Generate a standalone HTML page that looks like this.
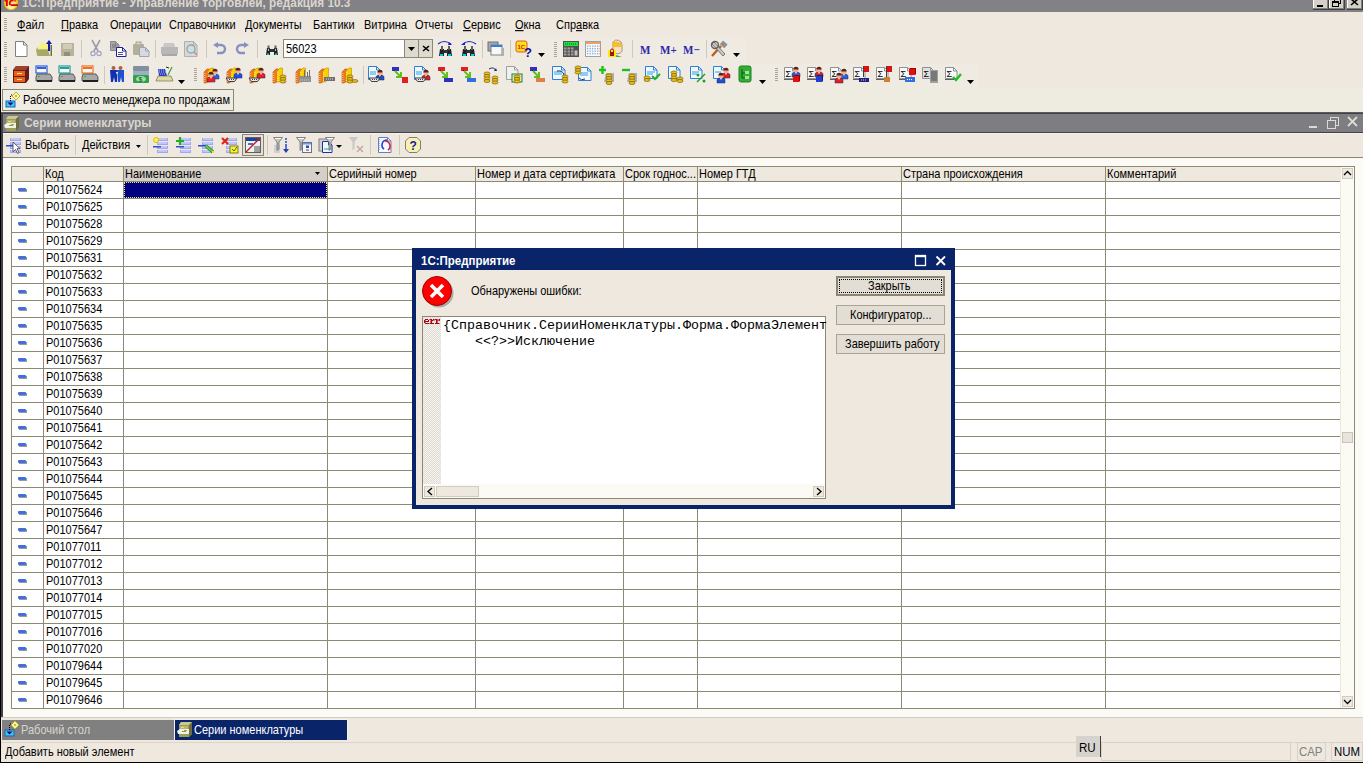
<!DOCTYPE html>
<html><head><meta charset="utf-8">
<style>
*{box-sizing:border-box;margin:0;padding:0}
html,body{width:1363px;height:763px;overflow:hidden}
body{position:relative;background:#EEE8DF;font-family:"Liberation Sans",sans-serif;font-size:11px;color:#000}
.a{position:absolute}
svg.a{overflow:visible}
.t{position:absolute;white-space:nowrap;line-height:13px;transform:scaleY(1.12);transform-origin:0 10.3px}
.nt{transform:none}
.u{text-decoration:underline}
.m{font-family:"Liberation Mono",monospace}
</style></head><body>

<div class="a" style="left:0px;top:0px;width:1363px;height:12px;background:#828185"></div>
<svg class="a" style="left:4px;top:-4px" width="16" height="16" viewBox="0 0 16 16"><circle cx="7" cy="7" r="7" fill="#F0C818"/><circle cx="7" cy="8.5" r="5" fill="#F8E070"/><circle cx="7" cy="10" r="3" fill="#FCF0A8"/><rect x="2" y="3" width="1.8" height="7" fill="#E80000"/><path d="M0.8 5.2L2.8 3.6" stroke="#E80000" stroke-width="1.4"/><path d="M9.5 4.6A2.6 2.6 0 0 0 5.8 6.6V9" stroke="#E80000" stroke-width="1.8" fill="none"/><rect x="6.5" y="8.2" width="7.5" height="1.8" fill="#E80000"/><path d="M11 4v1.5" stroke="#E80000" stroke-width="1.2"/></svg>
<div class="t" style="left:22px;top:-3px;font-weight:bold;font-size:11.8px;color:#DAD6CE">1С:Предприятие - Управление торговлей, редакция 10.3</div>
<div class="a" style="left:1313px;top:-4px;width:16px;height:14px;background:#D4D0C8;border-right:1px solid #404040;border-bottom:1px solid #404040;box-shadow:inset -1px -1px #808080, inset 1px 1px #fff"></div>
<svg class="a" style="left:1313px;top:-4px" width="16" height="14" viewBox="0 0 16 14"><rect x="4" y="9" width="6" height="2" fill="#000"/></svg>
<div class="a" style="left:1329px;top:-4px;width:16px;height:14px;background:#D4D0C8;border-right:1px solid #404040;border-bottom:1px solid #404040;box-shadow:inset -1px -1px #808080, inset 1px 1px #fff"></div>
<svg class="a" style="left:1329px;top:-4px" width="16" height="14" viewBox="0 0 16 14"><rect x="5.5" y="2.5" width="6" height="5" fill="none" stroke="#000"/><rect x="5" y="2" width="7" height="2" fill="#000"/><rect x="3.5" y="5.5" width="6" height="5" fill="#D4D0C8" stroke="#000"/><rect x="3" y="5" width="7" height="2" fill="#000"/></svg>
<div class="a" style="left:1347px;top:-4px;width:16px;height:14px;background:#D4D0C8;border-right:1px solid #404040;border-bottom:1px solid #404040;box-shadow:inset -1px -1px #808080, inset 1px 1px #fff"></div>
<svg class="a" style="left:1347px;top:-4px" width="16" height="14" viewBox="0 0 16 14"><path d="M4 3l7 6M11 3l-7 6" stroke="#000" stroke-width="1.6"/></svg>
<div class="a" style="left:1px;top:12px;width:1362px;height:26px;background:#EEE8DF"></div>
<svg class="a" style="left:4px;top:18px" width="4" height="13" viewBox="0 0 4 13"><rect x="0" y="0" width="3" height="1" fill="#A8A496"/><rect x="0" y="2" width="3" height="1" fill="#A8A496"/><rect x="0" y="4" width="3" height="1" fill="#A8A496"/><rect x="0" y="6" width="3" height="1" fill="#A8A496"/><rect x="0" y="8" width="3" height="1" fill="#A8A496"/><rect x="0" y="10" width="3" height="1" fill="#A8A496"/><rect x="0" y="12" width="3" height="1" fill="#A8A496"/></svg>
<div class="t" style="left:17px;top:19px;"><span class="u">Ф</span>айл</div>
<div class="t" style="left:61px;top:19px;"><span class="u">П</span>равка</div>
<div class="t" style="left:110px;top:19px;">Операции</div>
<div class="t" style="left:169px;top:19px;">Справочники</div>
<div class="t" style="left:245px;top:19px;">Документы</div>
<div class="t" style="left:313px;top:19px;">Бантики</div>
<div class="t" style="left:364px;top:19px;">Витрина</div>
<div class="t" style="left:415px;top:19px;">Отчеты</div>
<div class="t" style="left:463px;top:19px;"><span class="u">С</span>ервис</div>
<div class="t" style="left:515px;top:19px;"><span class="u">О</span>кна</div>
<div class="t" style="left:556px;top:19px;">Спр<span class="u">а</span>вка</div>
<div class="a" style="left:1px;top:37px;width:745px;height:26px;background:#EFEBE3"></div>
<div class="a" style="left:1px;top:63px;width:978px;height:25px;background:#EFEBE3"></div>
<svg class="a" style="left:4px;top:42px" width="4" height="15" viewBox="0 0 4 15"><rect x="0" y="0" width="3" height="1" fill="#A8A496"/><rect x="0" y="2" width="3" height="1" fill="#A8A496"/><rect x="0" y="4" width="3" height="1" fill="#A8A496"/><rect x="0" y="6" width="3" height="1" fill="#A8A496"/><rect x="0" y="8" width="3" height="1" fill="#A8A496"/><rect x="0" y="10" width="3" height="1" fill="#A8A496"/><rect x="0" y="12" width="3" height="1" fill="#A8A496"/><rect x="0" y="14" width="3" height="1" fill="#A8A496"/></svg>
<svg class="a" style="left:15px;top:41px" width="16" height="16" viewBox="0 0 16 16"><path d="M0.5 0.5h8l3.5 3.5V15.5H0.5z" fill="#FFFFFF" stroke="#808080"/><path d="M8.5 0.5v3.5h3.5" fill="none" stroke="#808080"/></svg>
<svg class="a" style="left:36px;top:40px" width="17" height="17" viewBox="0 0 17 17"><path d="M0 9l3-3h9v10H1z" fill="#BDBD7A"/><path d="M2 6l4-3h6v6H2z" fill="#F8F080"/><path d="M0 10h12l2 6H2z" fill="#A8A868"/><path d="M13 1v10" stroke="#1020A0" stroke-width="2"/><path d="M10 4l3-4 3 4z" fill="#1020A0"/><rect x="14.5" y="5" width="1.5" height="11" fill="#707030"/></svg>
<svg class="a" style="left:61px;top:43px" width="13" height="13" viewBox="0 0 13 13"><rect x="0" y="0" width="13" height="13" fill="#B8B49C"/><rect x="2" y="1" width="9" height="5" fill="#D0CCB8"/><rect x="3" y="9" width="6" height="4" fill="#909078"/></svg>
<div class="a" style="left:81px;top:40px;width:1px;height:18px;background:#CDC9BD"></div>
<svg class="a" style="left:90px;top:40px" width="12" height="17" viewBox="0 0 12 17"><path d="M2 0l6 11M10 0L4 11" stroke="#9C9CA8" stroke-width="1.6"/><circle cx="3" cy="13.5" r="2.2" fill="none" stroke="#A0A0C8" stroke-width="1.2"/><circle cx="9" cy="13.5" r="2.2" fill="none" stroke="#A0A0C8" stroke-width="1.2"/></svg>
<svg class="a" style="left:110px;top:41px" width="16" height="16" viewBox="0 0 16 16"><path d="M0.5 0.5h5l3.5 3.5V9.5H0.5z" fill="#A8A8A8" stroke="#888888"/><path d="M5.5 0.5v3.5h3.5" fill="none" stroke="#888888"/><path d="M2 4h4M2 6h4" stroke="#707070"/><path d="M6.5 6.5h6l3.5 3.5V15.5H6.5z" fill="#FFFFFF" stroke="#202090"/><path d="M12.5 6.5v3.5h3.5" fill="none" stroke="#202090"/><path d="M8 11.5h5M8 13.5h5" stroke="#202090" stroke-width=".8"/></svg>
<svg class="a" style="left:133px;top:41px" width="16" height="16" viewBox="0 0 16 16"><rect x="0" y="3" width="11" height="11" rx="1" fill="#B4B098"/><rect x="3" y="1" width="5" height="3" fill="#D8D4C4" stroke="#A8A490"/><path d="M6.5 6.5h6l3.5 3.5V15.5H6.5z" fill="#D8D8E0" stroke="#A0A0B8"/><path d="M12.5 6.5v3.5h3.5" fill="none" stroke="#A0A0B8"/></svg>
<div class="a" style="left:155px;top:40px;width:1px;height:18px;background:#CDC9BD"></div>
<svg class="a" style="left:161px;top:43px" width="17" height="13" viewBox="0 0 17 13"><path d="M3 0h10l1 4H2z" fill="#C8C8C8"/><path d="M0 4h17v7H0z" fill="#B8B8B8"/><rect x="1" y="11" width="15" height="2" fill="#A8A8A8"/></svg>
<svg class="a" style="left:184px;top:41px" width="15" height="16" viewBox="0 0 15 16"><path d="M0.5 0.5h9l3.5 3.5V15.5H0.5z" fill="#D8D8D8" stroke="#B0B0B0"/><path d="M9.5 0.5v3.5h3.5" fill="none" stroke="#B0B0B0"/><circle cx="7" cy="8" r="4" fill="#C8E0E8" stroke="#A0A0A0" stroke-width="1.3"/><path d="M10 11l3 3" stroke="#C09090" stroke-width="1.6"/></svg>
<div class="a" style="left:206px;top:40px;width:1px;height:18px;background:#CDC9BD"></div>
<svg class="a" style="left:213px;top:42px" width="13" height="14" viewBox="0 0 13 14"><path d="M4 3h4a4 4 0 0 1 0 8H4" stroke="#8890C0" stroke-width="2.4" fill="none"/><path d="M0 3l5-3v6z" fill="#8890C0"/></svg>
<svg class="a" style="left:236px;top:42px" width="13" height="14" viewBox="0 0 13 14"><path d="M9 3H5a4 4 0 0 0 0 8h4" stroke="#8890C0" stroke-width="2.4" fill="none"/><path d="M13 3L8 0v6z" fill="#8890C0"/></svg>
<div class="a" style="left:257px;top:40px;width:1px;height:18px;background:#CDC9BD"></div>
<svg class="a" style="left:266px;top:45px" width="12" height="10" viewBox="0 0 12 10"><path d="M1 3h3v7H0z M8 3h3l1 7H8z" fill="#202020"/><rect x="1.5" y="0.5" width="2" height="3" fill="#606060"/><rect x="8.5" y="0.5" width="2" height="3" fill="#606060"/><rect x="4" y="4" width="4" height="3" fill="#303030"/><rect x="1" y="8.5" width="2" height="1.5" fill="#00D0F0"/><rect x="9" y="8.5" width="2" height="1.5" fill="#00D0F0"/><rect x="2" y="4" width="1" height="2" fill="#C0C0C0"/><rect x="9" y="4" width="1" height="2" fill="#C0C0C0"/></svg>
<div class="a" style="left:283px;top:39px;width:150px;height:19px;border:1px solid #8C8876;background:#fff"></div>
<div class="t" style="left:286px;top:43px;">56023</div>
<div class="a" style="left:404px;top:40px;width:14px;height:17px;background:#DEDAD0;border-left:1px solid #8C8876"></div>
<div class="a" style="left:418px;top:40px;width:14px;height:17px;background:#DEDAD0;border-left:1px solid #8C8876"></div>
<svg class="a" style="left:408px;top:47px" width="7" height="4" viewBox="0 0 7 4"><path d="M0 0H7L3.5 4Z" fill="#000"/></svg>
<svg class="a" style="left:422px;top:45px" width="8" height="7" viewBox="0 0 8 7"><path d="M1 1l6 5M7 1L1 6" stroke="#000" stroke-width="1.6"/></svg>
<svg class="a" style="left:437px;top:40px" width="17" height="16" viewBox="0 0 17 16"><g transform="translate(2,5)"><path d="M1 4h4v7H0z M8 4h4l1 7H8z" fill="#202020"/><rect x="2" y="1" width="2" height="4" fill="#606060"/><rect x="9" y="1" width="2" height="4" fill="#606060"/><rect x="4" y="5" width="5" height="3" fill="#303030"/><rect x="1" y="9" width="3" height="2" fill="#00D0F0"/><rect x="9" y="9" width="3" height="2" fill="#00D0F0"/></g><path d="M1 4Q7 -1 14 4" stroke="#2020C0" fill="none" stroke-width="1.2"/><path d="M12 2l3 3-4 0z" fill="#2020C0"/></svg>
<svg class="a" style="left:460px;top:40px" width="17" height="16" viewBox="0 0 17 16"><g transform="translate(2,5)"><path d="M1 4h4v7H0z M8 4h4l1 7H8z" fill="#202020"/><rect x="2" y="1" width="2" height="4" fill="#606060"/><rect x="9" y="1" width="2" height="4" fill="#606060"/><rect x="4" y="5" width="5" height="3" fill="#303030"/><rect x="1" y="9" width="3" height="2" fill="#00D0F0"/><rect x="9" y="9" width="3" height="2" fill="#00D0F0"/></g><path d="M3 4Q9 -1 16 4" stroke="#2020C0" fill="none" stroke-width="1.2"/><path d="M5 2L1 5h4z" fill="#2020C0"/></svg>
<div class="a" style="left:482px;top:40px;width:1px;height:18px;background:#CDC9BD"></div>
<svg class="a" style="left:488px;top:42px" width="16" height="15" viewBox="0 0 16 15"><rect x="0" y="0" width="10" height="9" fill="#A8A8A8" stroke="#707070"/><rect x="3" y="3" width="11" height="10" fill="#F8F8F8" stroke="#808080"/><rect x="3" y="3" width="11" height="2" fill="#3080E0"/><rect x="14" y="6" width="2" height="8" fill="#B0B0B0"/></svg>
<div class="a" style="left:510px;top:40px;width:1px;height:18px;background:#CDC9BD"></div>
<svg class="a" style="left:516px;top:41px" width="16" height="16" viewBox="0 0 16 16"><rect x="0" y="0" width="11" height="11" rx="2" fill="#F8E020" stroke="#E06010"/><text x="1.5" y="8" font-family="Liberation Sans" font-weight="bold" font-size="6" fill="#E01010">1С</text><text x="8" y="16" font-family="Liberation Sans" font-weight="bold" font-size="13" fill="#1010A0">?</text></svg>
<svg class="a" style="left:538px;top:53px" width="7" height="4" viewBox="0 0 7 4"><path d="M0 0H7L3.5 4Z" fill="#000"/></svg>
<svg class="a" style="left:554px;top:42px" width="4" height="15" viewBox="0 0 4 15"><rect x="0" y="0" width="3" height="1" fill="#A8A496"/><rect x="0" y="2" width="3" height="1" fill="#A8A496"/><rect x="0" y="4" width="3" height="1" fill="#A8A496"/><rect x="0" y="6" width="3" height="1" fill="#A8A496"/><rect x="0" y="8" width="3" height="1" fill="#A8A496"/><rect x="0" y="10" width="3" height="1" fill="#A8A496"/><rect x="0" y="12" width="3" height="1" fill="#A8A496"/><rect x="0" y="14" width="3" height="1" fill="#A8A496"/></svg>
<svg class="a" style="left:563px;top:41px" width="16" height="16" viewBox="0 0 16 16"><rect x="0" y="0" width="16" height="16" fill="#505050"/><rect x="1" y="1" width="14" height="4" fill="#20E040"/><path d="M2 3h12" stroke="#106020" stroke-dasharray="1 1"/><rect x="1.0" y="6.5" width="2.5" height="2" fill="#A0A0A0"/><rect x="4.5" y="6.5" width="2.5" height="2" fill="#A0A0A0"/><rect x="8.0" y="6.5" width="2.5" height="2" fill="#A0A0A0"/><rect x="1.0" y="9.5" width="2.5" height="2" fill="#A0A0A0"/><rect x="4.5" y="9.5" width="2.5" height="2" fill="#A0A0A0"/><rect x="8.0" y="9.5" width="2.5" height="2" fill="#A0A0A0"/><rect x="1.0" y="12.5" width="2.5" height="2" fill="#A0A0A0"/><rect x="4.5" y="12.5" width="2.5" height="2" fill="#A0A0A0"/><rect x="8.0" y="12.5" width="2.5" height="2" fill="#A0A0A0"/><rect x="11.5" y="9.5" width="3" height="5" fill="#C0C0C0"/></svg>
<svg class="a" style="left:585px;top:41px" width="16" height="16" viewBox="0 0 16 16"><rect x="0.5" y="0.5" width="15" height="15" fill="#F8F8F8" stroke="#A0A0A0"/><rect x="1" y="1" width="14" height="2" fill="#F0A060"/><rect x="2.0" y="4.5" width="1.3" height="1.3" fill="#80B0E0"/><rect x="4.5" y="4.5" width="1.3" height="1.3" fill="#80B0E0"/><rect x="7.0" y="4.5" width="1.3" height="1.3" fill="#80B0E0"/><rect x="9.5" y="4.5" width="1.3" height="1.3" fill="#80B0E0"/><rect x="12.0" y="4.5" width="1.3" height="1.3" fill="#80B0E0"/><rect x="14.5" y="4.5" width="1.3" height="1.3" fill="#F08050"/><rect x="2.0" y="7.0" width="1.3" height="1.3" fill="#80B0E0"/><rect x="4.5" y="7.0" width="1.3" height="1.3" fill="#80B0E0"/><rect x="7.0" y="7.0" width="1.3" height="1.3" fill="#80B0E0"/><rect x="9.5" y="7.0" width="1.3" height="1.3" fill="#80B0E0"/><rect x="12.0" y="7.0" width="1.3" height="1.3" fill="#80B0E0"/><rect x="14.5" y="7.0" width="1.3" height="1.3" fill="#F08050"/><rect x="2.0" y="9.5" width="1.3" height="1.3" fill="#80B0E0"/><rect x="4.5" y="9.5" width="1.3" height="1.3" fill="#80B0E0"/><rect x="7.0" y="9.5" width="1.3" height="1.3" fill="#80B0E0"/><rect x="9.5" y="9.5" width="1.3" height="1.3" fill="#80B0E0"/><rect x="12.0" y="9.5" width="1.3" height="1.3" fill="#80B0E0"/><rect x="14.5" y="9.5" width="1.3" height="1.3" fill="#F08050"/><rect x="2.0" y="12.0" width="1.3" height="1.3" fill="#80B0E0"/><rect x="4.5" y="12.0" width="1.3" height="1.3" fill="#80B0E0"/><rect x="7.0" y="12.0" width="1.3" height="1.3" fill="#80B0E0"/><rect x="9.5" y="12.0" width="1.3" height="1.3" fill="#80B0E0"/><rect x="12.0" y="12.0" width="1.3" height="1.3" fill="#80B0E0"/><rect x="14.5" y="12.0" width="1.3" height="1.3" fill="#F08050"/></svg>
<svg class="a" style="left:608px;top:41px" width="15" height="16" viewBox="0 0 15 16"><path d="M5 1a5 5 0 0 1 9 3v6a5 5 0 0 1-9 0z" fill="#F8E0C0" stroke="#806040" stroke-width=".6"/><path d="M4 2q5-3 10 1v3h-10z" fill="#F0C030"/><path d="M8 14l6 2h-6z" fill="#40B040"/><rect x="0" y="9" width="8" height="7" fill="#F8F000"/><rect x="2" y="11" width="4" height="4" fill="#A01030"/><path d="M2.5 11v-1.5a1.5 1.5 0 0 1 3 0V11" stroke="#A01030" fill="none"/></svg>
<div class="a" style="left:632px;top:40px;width:1px;height:18px;background:#CDC9BD"></div>
<div class="t" style="left:640px;top:44px;font-family:'Liberation Serif',serif;font-weight:bold;font-size:11px;color:#2828A8;line-height:13px">M</div>
<div class="t" style="left:660px;top:44px;font-family:'Liberation Serif',serif;font-weight:bold;font-size:11px;color:#2828A8;line-height:13px">M+</div>
<div class="t" style="left:683px;top:44px;font-family:'Liberation Serif',serif;font-weight:bold;font-size:11px;color:#2828A8;line-height:13px">M−</div>
<div class="a" style="left:706px;top:40px;width:1px;height:18px;background:#CDC9BD"></div>
<svg class="a" style="left:710px;top:41px" width="17" height="17" viewBox="0 0 17 17"><path d="M2 15l9-10" stroke="#C06010" stroke-width="2.4"/><path d="M4 1l11 12-2 2L2 3z" fill="#C8C8C8" stroke="#606060" stroke-width=".8"/><circle cx="5" cy="4" r="3.5" fill="none" stroke="#606060" stroke-width="1.4"/><rect x="11" y="1" width="6" height="5" fill="#909090" transform="rotate(40 14 3)"/></svg>
<svg class="a" style="left:733px;top:53px" width="7" height="4" viewBox="0 0 7 4"><path d="M0 0H7L3.5 4Z" fill="#000"/></svg>
<svg class="a" style="left:4px;top:67px" width="4" height="15" viewBox="0 0 4 15"><rect x="0" y="0" width="3" height="1" fill="#A8A496"/><rect x="0" y="2" width="3" height="1" fill="#A8A496"/><rect x="0" y="4" width="3" height="1" fill="#A8A496"/><rect x="0" y="6" width="3" height="1" fill="#A8A496"/><rect x="0" y="8" width="3" height="1" fill="#A8A496"/><rect x="0" y="10" width="3" height="1" fill="#A8A496"/><rect x="0" y="12" width="3" height="1" fill="#A8A496"/><rect x="0" y="14" width="3" height="1" fill="#A8A496"/></svg>
<svg class="a" style="left:13px;top:66px" width="16" height="17" viewBox="0 0 16 17"><path d="M3 0h13v13l-3 4H0V4z" fill="#602020"/><path d="M3 0h13l-3 4H0z" fill="#A04030"/><rect x="1" y="5" width="11" height="5" fill="#F06010"/><rect x="1" y="11" width="11" height="5" fill="#F06010"/><rect x="4" y="7" width="5" height="1" fill="#F8E0A0"/><rect x="4" y="13" width="5" height="1" fill="#F8E0A0"/></svg>
<svg class="a" style="left:36px;top:66px" width="17" height="17" viewBox="0 0 17 17"><rect x="0" y="0" width="11" height="7" fill="#F8F8F8" stroke="#3060E0" stroke-width="1.2"/><rect x="1" y="1" width="9" height="2" fill="#3060E0"/><path d="M1 8h13l2 3v4H0v-4z" fill="#A8A8A8" stroke="#404040" stroke-width=".8"/><rect x="1" y="14" width="15" height="2" fill="#202020"/><rect x="2" y="10" width="2" height="1" fill="#20C020"/></svg>
<svg class="a" style="left:59px;top:66px" width="17" height="17" viewBox="0 0 17 17"><rect x="0" y="0" width="11" height="7" fill="#F8F8F8" stroke="#20A0A0" stroke-width="1.2"/><rect x="1" y="1" width="9" height="2" fill="#20A0A0"/><path d="M1 8h13l2 3v4H0v-4z" fill="#A8A8A8" stroke="#404040" stroke-width=".8"/><rect x="1" y="14" width="15" height="2" fill="#202020"/><rect x="2" y="10" width="2" height="1" fill="#20C020"/></svg>
<svg class="a" style="left:82px;top:66px" width="17" height="17" viewBox="0 0 17 17"><rect x="0" y="0" width="11" height="7" fill="#F8F8F8" stroke="#F07020" stroke-width="1.2"/><rect x="1" y="1" width="9" height="2" fill="#F07020"/><path d="M1 8h13l2 3v4H0v-4z" fill="#A8A8A8" stroke="#404040" stroke-width=".8"/><rect x="1" y="14" width="15" height="2" fill="#202020"/><rect x="2" y="10" width="2" height="1" fill="#20C020"/></svg>
<div class="a" style="left:104px;top:66px;width:1px;height:18px;background:#CDC9BD"></div>
<svg class="a" style="left:110px;top:66px" width="14" height="17" viewBox="0 0 14 17"><circle cx="3.5" cy="2" r="2" fill="#B06040"/><circle cx="10.5" cy="2" r="2" fill="#B06040"/><path d="M0 4h7v12H5l-1-5-1 5H1z" fill="#1030B0"/><path d="M7 4h7v12h-2l-1-5-1 5H8z" fill="#2050D0"/><path d="M6 6l1 3 1-3z" fill="#fff"/></svg>
<svg class="a" style="left:133px;top:66px" width="16" height="17" viewBox="0 0 16 17"><rect x="0" y="0" width="16" height="5" rx="1" fill="#8090A0"/><rect x="0" y="5" width="16" height="4" fill="#A0B0C0"/><rect x="0" y="9" width="16" height="8" rx="1" fill="#30A050"/><ellipse cx="8" cy="13" rx="5" ry="3" fill="#A0E0A0"/><text x="5.5" y="16" font-size="7" font-weight="bold" fill="#207030" font-family="Liberation Sans">$</text></svg>
<svg class="a" style="left:156px;top:66px" width="17" height="17" viewBox="0 0 17 17"><path d="M2 10h13l2 5H0z" fill="#E0D8A0" stroke="#808060" stroke-width=".8"/><path d="M2 3l7 0 2 7H3z" fill="#3040C0"/><path d="M3 4h6M3 6h7M4 8h6" stroke="#A0C0F0" stroke-dasharray="1 1"/><path d="M12 9l4-8" stroke="#40A040" stroke-width="1.3"/><path d="M10 1l3 1" stroke="#202020"/></svg>
<svg class="a" style="left:178px;top:80px" width="7" height="4" viewBox="0 0 7 4"><path d="M0 0H7L3.5 4Z" fill="#000"/></svg>
<svg class="a" style="left:194px;top:68px" width="4" height="13" viewBox="0 0 4 13"><rect x="0" y="0" width="3" height="1" fill="#A8A496"/><rect x="0" y="2" width="3" height="1" fill="#A8A496"/><rect x="0" y="4" width="3" height="1" fill="#A8A496"/><rect x="0" y="6" width="3" height="1" fill="#A8A496"/><rect x="0" y="8" width="3" height="1" fill="#A8A496"/><rect x="0" y="10" width="3" height="1" fill="#A8A496"/><rect x="0" y="12" width="3" height="1" fill="#A8A496"/></svg>
<svg class="a" style="left:203px;top:66px" width="17" height="17" viewBox="0 0 17 17"><path d="M1 6l3-3h2.5v11l-3 3H1z" fill="#F07818" stroke="#C05010" stroke-width=".6"/><path d="M1.8 7v9" stroke="#FFD0A0" stroke-dasharray="1 1"/><path d="M5 5l3-3h2.5v11l-3 3H5z" fill="#F8D000" stroke="#C09000" stroke-width=".6"/><path d="M5.8 6v9" stroke="#FFF8A0" stroke-dasharray="1 1"/><path d="M8 13v-3.5l2-1.5h4l2 1.5V13z" fill="#3060D0" stroke="#202060" stroke-width=".5"/><path d="M11 8l1 2 1-2z" fill="#fff"/><circle cx="12" cy="5.8" r="2.6" fill="#F0B090"/><path d="M9.4 5.4a2.6 2.6 0 0 1 5.2 0" fill="#602010"/><path d="M4 16v-3.5l2-1.5h4l2 1.5V16z" fill="#E82020" stroke="#202060" stroke-width=".5"/><path d="M7 11l1 2 1-2z" fill="#fff"/><circle cx="8" cy="8.8" r="2.6" fill="#F0B090"/><path d="M5.4 8.4a2.6 2.6 0 0 1 5.2 0" fill="#602010"/></svg>
<svg class="a" style="left:226px;top:66px" width="17" height="17" viewBox="0 0 17 17"><path d="M1 6l3-3h2.5v11l-3 3H1z" fill="#F07818" stroke="#C05010" stroke-width=".6"/><path d="M1.8 7v9" stroke="#FFD0A0" stroke-dasharray="1 1"/><path d="M5 5l3-3h2.5v11l-3 3H5z" fill="#F8D000" stroke="#C09000" stroke-width=".6"/><path d="M5.8 6v9" stroke="#FFF8A0" stroke-dasharray="1 1"/><path d="M0 12h11l-2.5 3.5h-6z" fill="#E8E8E8" stroke="#404040" stroke-width="1"/><path d="M3 13.5h5" stroke="#404040" stroke-dasharray="1 1"/><path d="M11 12l2-3" stroke="#404040" stroke-width="1.2"/><path d="M8 12v-3.5l2-1.5h4l2 1.5V12z" fill="#2050E0" stroke="#202060" stroke-width=".5"/><path d="M11 7l1 2 1-2z" fill="#fff"/><circle cx="12" cy="4.8" r="2.6" fill="#F0B090"/><path d="M9.4 4.4a2.6 2.6 0 0 1 5.2 0" fill="#602010"/></svg>
<svg class="a" style="left:249px;top:66px" width="17" height="17" viewBox="0 0 17 17"><path d="M1 6l3-3h2.5v11l-3 3H1z" fill="#F07818" stroke="#C05010" stroke-width=".6"/><path d="M1.8 7v9" stroke="#FFD0A0" stroke-dasharray="1 1"/><path d="M5 5l3-3h2.5v11l-3 3H5z" fill="#F8D000" stroke="#C09000" stroke-width=".6"/><path d="M5.8 6v9" stroke="#FFF8A0" stroke-dasharray="1 1"/><path d="M0 12h11l-2.5 3.5h-6z" fill="#E8E8E8" stroke="#404040" stroke-width="1"/><path d="M3 13.5h5" stroke="#404040" stroke-dasharray="1 1"/><path d="M11 12l2-3" stroke="#404040" stroke-width="1.2"/><path d="M8 12v-3.5l2-1.5h4l2 1.5V12z" fill="#E82020" stroke="#202060" stroke-width=".5"/><path d="M11 7l1 2 1-2z" fill="#fff"/><circle cx="12" cy="4.8" r="2.6" fill="#F0B090"/><path d="M9.4 4.4a2.6 2.6 0 0 1 5.2 0" fill="#602010"/></svg>
<svg class="a" style="left:272px;top:66px" width="16" height="17" viewBox="0 0 16 17"><path d="M1 6l3-3h2.5v11l-3 3H1z" fill="#F07818" stroke="#C05010" stroke-width=".6"/><path d="M1.8 7v9" stroke="#FFD0A0" stroke-dasharray="1 1"/><path d="M5 5l3-3h2.5v11l-3 3H5z" fill="#F8D000" stroke="#C09000" stroke-width=".6"/><path d="M5.8 6v9" stroke="#FFF8A0" stroke-dasharray="1 1"/><ellipse cx="11" cy="10.5" rx="3" ry="1.5" fill="#E8C020" stroke="#806000" stroke-width=".7"/><ellipse cx="11" cy="13.0" rx="3" ry="1.5" fill="#E8C020" stroke="#806000" stroke-width=".7"/><ellipse cx="11" cy="15.5" rx="3" ry="1.5" fill="#E8C020" stroke="#806000" stroke-width=".7"/></svg>
<svg class="a" style="left:295px;top:66px" width="16" height="17" viewBox="0 0 16 17"><path d="M1 6l3-3h2.5v11l-3 3H1z" fill="#F07818" stroke="#C05010" stroke-width=".6"/><path d="M1.8 7v9" stroke="#FFD0A0" stroke-dasharray="1 1"/><path d="M5 5l3-3h2.5v11l-3 3H5z" fill="#F8D000" stroke="#C09000" stroke-width=".6"/><path d="M5.8 6v9" stroke="#FFF8A0" stroke-dasharray="1 1"/><path d="M4 10h12v6H4z" fill="#909090"/><path d="M9 4h1v7H9zM12 6h1v5h-1zM14 4h1v7h-1z" fill="#707070"/><path d="M5 14h10" stroke="#d0d0d0" stroke-dasharray="1 1"/></svg>
<svg class="a" style="left:318px;top:66px" width="17" height="17" viewBox="0 0 17 17"><path d="M1 6l3-3h2.5v11l-3 3H1z" fill="#F07818" stroke="#C05010" stroke-width=".6"/><path d="M1.8 7v9" stroke="#FFD0A0" stroke-dasharray="1 1"/><path d="M5 5l3-3h2.5v11l-3 3H5z" fill="#F8D000" stroke="#C09000" stroke-width=".6"/><path d="M5.8 6v9" stroke="#FFF8A0" stroke-dasharray="1 1"/><rect x="6" y="11" width="11" height="4" fill="#707070"/><path d="M8 13h7" stroke="#E0E0E0" stroke-dasharray="1 1"/></svg>
<svg class="a" style="left:341px;top:66px" width="17" height="17" viewBox="0 0 17 17"><path d="M1 6l3-3h2.5v11l-3 3H1z" fill="#F07818" stroke="#C05010" stroke-width=".6"/><path d="M1.8 7v9" stroke="#FFD0A0" stroke-dasharray="1 1"/><path d="M5 5l3-3h2.5v11l-3 3H5z" fill="#F8D000" stroke="#C09000" stroke-width=".6"/><path d="M5.8 6v9" stroke="#FFF8A0" stroke-dasharray="1 1"/><ellipse cx="9" cy="10.5" rx="3" ry="1.5" fill="#E8C020" stroke="#806000" stroke-width=".7"/><ellipse cx="9" cy="13.0" rx="3" ry="1.5" fill="#E8C020" stroke="#806000" stroke-width=".7"/><ellipse cx="9" cy="15.5" rx="3" ry="1.5" fill="#E8C020" stroke="#806000" stroke-width=".7"/><ellipse cx="14" cy="15" rx="3" ry="1.4" fill="#E8C020" stroke="#806000" stroke-width=".7"/></svg>
<div class="a" style="left:363px;top:66px;width:1px;height:18px;background:#CDC9BD"></div>
<svg class="a" style="left:368px;top:66px" width="17" height="17" viewBox="0 0 17 17"><path d="M0.5 0.5h8l3.5 3.5V13.5H0.5z" fill="#F0F8FF" stroke="#3080D0"/><path d="M8.5 0.5v3.5h3.5" fill="none" stroke="#3080D0"/><path d="M2 6h6M2 8h6" stroke="#30A0E0"/><path d="M8 14v-3.5l2-1.5h4l2 1.5V14z" fill="#2050D0" stroke="#202060" stroke-width=".5"/><path d="M11 9l1 2 1-2z" fill="#fff"/><circle cx="12" cy="6.8" r="2.6" fill="#F0B090"/><path d="M9.4 6.4a2.6 2.6 0 0 1 5.2 0" fill="#602010"/><path d="M1 12h11l-2.5 3.5h-6z" fill="#E8E8E8" stroke="#404040" stroke-width="1"/><path d="M4 13.5h5" stroke="#404040" stroke-dasharray="1 1"/><path d="M12 12l2-3" stroke="#404040" stroke-width="1.2"/></svg>
<svg class="a" style="left:391px;top:66px" width="17" height="17" viewBox="0 0 17 17"><rect x="1" y="1" width="7" height="4" fill="#3030C0"/><path d="M3 4l6 6" stroke="#202020" stroke-width="1"/><path d="M4 5l6 6M10 6v5h-5" stroke="#60C020" stroke-width="2" fill="none"/><rect x="11" y="11" width="6" height="6" fill="#E02020"/></svg>
<svg class="a" style="left:414px;top:66px" width="17" height="17" viewBox="0 0 17 17"><path d="M0.5 0.5h8l3.5 3.5V13.5H0.5z" fill="#F0F8FF" stroke="#3080D0"/><path d="M8.5 0.5v3.5h3.5" fill="none" stroke="#3080D0"/><path d="M2 6h6M2 8h6" stroke="#30A0E0"/><path d="M8 14v-3.5l2-1.5h4l2 1.5V14z" fill="#E02020" stroke="#202060" stroke-width=".5"/><path d="M11 9l1 2 1-2z" fill="#fff"/><circle cx="12" cy="6.8" r="2.6" fill="#F0B090"/><path d="M9.4 6.4a2.6 2.6 0 0 1 5.2 0" fill="#602010"/><path d="M1 12h11l-2.5 3.5h-6z" fill="#E8E8E8" stroke="#404040" stroke-width="1"/><path d="M4 13.5h5" stroke="#404040" stroke-dasharray="1 1"/><path d="M12 12l2-3" stroke="#404040" stroke-width="1.2"/></svg>
<svg class="a" style="left:437px;top:66px" width="17" height="17" viewBox="0 0 17 17"><rect x="1" y="1" width="7" height="4" fill="#E02020"/><path d="M3 4l6 6" stroke="#202020" stroke-width="1"/><path d="M4 5l6 6M10 6v5h-5" stroke="#60C020" stroke-width="2" fill="none"/><rect x="7" y="12" width="9" height="4" fill="#3030C0"/></svg>
<svg class="a" style="left:460px;top:66px" width="17" height="17" viewBox="0 0 17 17"><rect x="1" y="1" width="7" height="4" fill="#E02020"/><path d="M3 4l6 6" stroke="#202020" stroke-width="1"/><path d="M4 5l6 6M10 6v5h-5" stroke="#60C020" stroke-width="2" fill="none"/><rect x="7" y="12" width="9" height="4" fill="#3070E0"/></svg>
<svg class="a" style="left:483px;top:66px" width="17" height="17" viewBox="0 0 17 17"><ellipse cx="4" cy="7.5" rx="3" ry="1.5" fill="#E8C020" stroke="#806000" stroke-width=".7"/><ellipse cx="4" cy="10.0" rx="3" ry="1.5" fill="#E8C020" stroke="#806000" stroke-width=".7"/><ellipse cx="4" cy="12.5" rx="3" ry="1.5" fill="#E8C020" stroke="#806000" stroke-width=".7"/><ellipse cx="4" cy="15.0" rx="3" ry="1.5" fill="#E8C020" stroke="#806000" stroke-width=".7"/><ellipse cx="12" cy="11.5" rx="3" ry="1.5" fill="#E8C020" stroke="#806000" stroke-width=".7"/><ellipse cx="12" cy="14.0" rx="3" ry="1.5" fill="#E8C020" stroke="#806000" stroke-width=".7"/><ellipse cx="12" cy="16.5" rx="3" ry="1.5" fill="#E8C020" stroke="#806000" stroke-width=".7"/><path d="M6 3Q11 0 13 5" stroke="#203060" fill="none"/><path d="M11 5h3l-1-3z" fill="#203060"/></svg>
<svg class="a" style="left:506px;top:66px" width="17" height="17" viewBox="0 0 17 17"><path d="M0.5 0.5h8l3.5 3.5V13.5H0.5z" fill="#F0F0F0" stroke="#A0A0A0"/><path d="M8.5 0.5v3.5h3.5" fill="none" stroke="#A0A0A0"/><rect x="6" y="8" width="10" height="8" fill="#E0F0D0" stroke="#208020"/><ellipse cx="11" cy="10.5" rx="3" ry="1.5" fill="#E8C020" stroke="#806000" stroke-width=".7"/><ellipse cx="11" cy="13.0" rx="3" ry="1.5" fill="#E8C020" stroke="#806000" stroke-width=".7"/><ellipse cx="11" cy="15.5" rx="3" ry="1.5" fill="#E8C020" stroke="#806000" stroke-width=".7"/></svg>
<svg class="a" style="left:529px;top:66px" width="17" height="17" viewBox="0 0 17 17"><rect x="1" y="1" width="7" height="4" fill="#3030C0"/><path d="M3 4l6 6" stroke="#202020" stroke-width="1"/><path d="M4 5l6 6M10 6v5h-5" stroke="#60C020" stroke-width="2" fill="none"/><rect x="7" y="12" width="9" height="4" fill="#E08040"/></svg>
<svg class="a" style="left:552px;top:66px" width="17" height="17" viewBox="0 0 17 17"><path d="M0.5 0.5h9l3.5 3.5V13.5H0.5z" fill="#F0F8FF" stroke="#3080D0"/><path d="M9.5 0.5v3.5h3.5" fill="none" stroke="#3080D0"/><path d="M2 6h8M2 8h8" stroke="#30A0E0"/><path d="M5 5Q11 4 12 9" stroke="#203060" fill="none"/><ellipse cx="13" cy="10.5" rx="3" ry="1.5" fill="#E8C020" stroke="#806000" stroke-width=".7"/><ellipse cx="13" cy="13.0" rx="3" ry="1.5" fill="#E8C020" stroke="#806000" stroke-width=".7"/><ellipse cx="13" cy="15.5" rx="3" ry="1.5" fill="#E8C020" stroke="#806000" stroke-width=".7"/></svg>
<svg class="a" style="left:575px;top:66px" width="17" height="17" viewBox="0 0 17 17"><path d="M3.5 1.5h9l3.5 3.5V14.5H3.5z" fill="#F0F8FF" stroke="#3080D0"/><path d="M12.5 1.5v3.5h3.5" fill="none" stroke="#3080D0"/><path d="M5 7h8M5 9h8" stroke="#30A0E0"/><path d="M4 12Q6 15 10 13" stroke="#203060" fill="none"/><ellipse cx="3" cy="1.5" rx="3" ry="1.5" fill="#E8C020" stroke="#806000" stroke-width=".7"/><ellipse cx="3" cy="4.0" rx="3" ry="1.5" fill="#E8C020" stroke="#806000" stroke-width=".7"/><ellipse cx="3" cy="6.5" rx="3" ry="1.5" fill="#E8C020" stroke="#806000" stroke-width=".7"/></svg>
<svg class="a" style="left:598px;top:66px" width="17" height="17" viewBox="0 0 17 17"><path d="M6 16l2-9h8v9z" fill="#B0B0B0"/><ellipse cx="11" cy="9.5" rx="3" ry="1.5" fill="#E8C020" stroke="#806000" stroke-width=".7"/><ellipse cx="11" cy="12.0" rx="3" ry="1.5" fill="#E8C020" stroke="#806000" stroke-width=".7"/><ellipse cx="11" cy="14.5" rx="3" ry="1.5" fill="#E8C020" stroke="#806000" stroke-width=".7"/><ellipse cx="11" cy="17.0" rx="3" ry="1.5" fill="#E8C020" stroke="#806000" stroke-width=".7"/><path d="M1 4h7M4.5 0v8" stroke="#20C020" stroke-width="2.4"/></svg>
<svg class="a" style="left:621px;top:66px" width="17" height="17" viewBox="0 0 17 17"><path d="M6 16l2-9h8v9z" fill="#B0B0B0"/><ellipse cx="11" cy="9.5" rx="3" ry="1.5" fill="#E8C020" stroke="#806000" stroke-width=".7"/><ellipse cx="11" cy="12.0" rx="3" ry="1.5" fill="#E8C020" stroke="#806000" stroke-width=".7"/><ellipse cx="11" cy="14.5" rx="3" ry="1.5" fill="#E8C020" stroke="#806000" stroke-width=".7"/><ellipse cx="11" cy="17.0" rx="3" ry="1.5" fill="#E8C020" stroke="#806000" stroke-width=".7"/><path d="M1 4h8" stroke="#20C020" stroke-width="2.4"/></svg>
<svg class="a" style="left:644px;top:66px" width="17" height="17" viewBox="0 0 17 17"><path d="M1.5 0.5h8l3.5 3.5V12.5H1.5z" fill="#F0F8FF" stroke="#3080D0"/><path d="M9.5 0.5v3.5h3.5" fill="none" stroke="#3080D0"/><path d="M3 6h8M3 8h6" stroke="#30A0E0"/><ellipse cx="3" cy="11.5" rx="3" ry="1.5" fill="#E8C020" stroke="#806000" stroke-width=".7"/><ellipse cx="3" cy="14.0" rx="3" ry="1.5" fill="#E8C020" stroke="#806000" stroke-width=".7"/><path d="M8 10l3 3 5-5" stroke="#20B020" stroke-width="2" fill="none"/></svg>
<svg class="a" style="left:667px;top:66px" width="17" height="17" viewBox="0 0 17 17"><path d="M1.5 0.5h8l3.5 3.5V12.5H1.5z" fill="#F0F8FF" stroke="#3080D0"/><path d="M9.5 0.5v3.5h3.5" fill="none" stroke="#3080D0"/><ellipse cx="7" cy="6.5" rx="3" ry="1.5" fill="#E8C020" stroke="#806000" stroke-width=".7"/><ellipse cx="7" cy="9.0" rx="3" ry="1.5" fill="#E8C020" stroke="#806000" stroke-width=".7"/><ellipse cx="7" cy="11.5" rx="3" ry="1.5" fill="#E8C020" stroke="#806000" stroke-width=".7"/><ellipse cx="7" cy="14.0" rx="3" ry="1.5" fill="#E8C020" stroke="#806000" stroke-width=".7"/><ellipse cx="13" cy="12.5" rx="3" ry="1.5" fill="#E8C020" stroke="#806000" stroke-width=".7"/><ellipse cx="13" cy="15.0" rx="3" ry="1.5" fill="#E8C020" stroke="#806000" stroke-width=".7"/></svg>
<svg class="a" style="left:690px;top:66px" width="17" height="17" viewBox="0 0 17 17"><path d="M0.5 0.5h8l3.5 3.5V12.5H0.5z" fill="#F0F8FF" stroke="#3080D0"/><path d="M8.5 0.5v3.5h3.5" fill="none" stroke="#3080D0"/><path d="M2 6h7M2 8h5" stroke="#30A0E0"/><path d="M7 16l8-8" stroke="#20A020" stroke-width="1.5"/><circle cx="8" cy="9" r="1.5" fill="#20A020"/><circle cx="14" cy="15" r="1.5" fill="#20A020"/></svg>
<svg class="a" style="left:713px;top:66px" width="17" height="17" viewBox="0 0 17 17"><path d="M0.5 0.5h8l3.5 3.5V12.5H0.5z" fill="#F0F8FF" stroke="#3080D0"/><path d="M8.5 0.5v3.5h3.5" fill="none" stroke="#3080D0"/><path d="M2 6h6" stroke="#30A0E0"/><path d="M9 12v-3.5l2-1.5h4l2 1.5V12z" fill="#E02020" stroke="#202060" stroke-width=".5"/><path d="M12 7l1 2 1-2z" fill="#fff"/><circle cx="13" cy="4.8" r="2.6" fill="#F0B090"/><path d="M10.4 4.4a2.6 2.6 0 0 1 5.2 0" fill="#602010"/><path d="M4 17v-3.5l2-1.5h4l2 1.5V17z" fill="#2050D0" stroke="#202060" stroke-width=".5"/><path d="M7 12l1 2 1-2z" fill="#fff"/><circle cx="8" cy="9.8" r="2.6" fill="#F0B090"/><path d="M5.4 9.4a2.6 2.6 0 0 1 5.2 0" fill="#602010"/></svg>
<svg class="a" style="left:739px;top:66px" width="12" height="17" viewBox="0 0 12 17"><rect x="0" y="0" width="12" height="16" rx="2" fill="#30B030" stroke="#208020"/><path d="M3 3v9h5M3 7h5" stroke="#105010" fill="none"/><rect x="6" y="5" width="4" height="3" fill="#A0E0A0"/><rect x="6" y="10" width="4" height="3" fill="#A0E0A0"/></svg>
<svg class="a" style="left:759px;top:80px" width="7" height="4" viewBox="0 0 7 4"><path d="M0 0H7L3.5 4Z" fill="#000"/></svg>
<svg class="a" style="left:775px;top:68px" width="4" height="13" viewBox="0 0 4 13"><rect x="0" y="0" width="3" height="1" fill="#A8A496"/><rect x="0" y="2" width="3" height="1" fill="#A8A496"/><rect x="0" y="4" width="3" height="1" fill="#A8A496"/><rect x="0" y="6" width="3" height="1" fill="#A8A496"/><rect x="0" y="8" width="3" height="1" fill="#A8A496"/><rect x="0" y="10" width="3" height="1" fill="#A8A496"/><rect x="0" y="12" width="3" height="1" fill="#A8A496"/></svg>
<svg class="a" style="left:784px;top:66px" width="17" height="17" viewBox="0 0 17 17"><path d="M0.5 1.5h8l3.5 3.5V12.5H0.5z" fill="#F8F8F8" stroke="#909090"/><path d="M8.5 1.5v3.5h3.5" fill="none" stroke="#909090"/><text x="1.5" y="11" font-family="Liberation Sans" font-size="9" fill="#000">Σ</text><rect x="0" y="13" width="10" height="1" fill="#606060"/><path d="M8 11v-3.5l2-1.5h4l2 1.5V11z" fill="#3060D0" stroke="#202060" stroke-width=".5"/><path d="M11 6l1 2 1-2z" fill="#fff"/><circle cx="12" cy="3.8" r="2.6" fill="#F0B090"/><path d="M9.4 3.4a2.6 2.6 0 0 1 5.2 0" fill="#602010"/><rect x="9" y="10" width="6" height="6" fill="#E01010"/><path d="M9 10l1-1h6l-1 1zM15 10l1-1v6l-1 1z" fill="#A00000"/></svg>
<svg class="a" style="left:807px;top:66px" width="17" height="17" viewBox="0 0 17 17"><path d="M0.5 1.5h8l3.5 3.5V12.5H0.5z" fill="#F8F8F8" stroke="#909090"/><path d="M8.5 1.5v3.5h3.5" fill="none" stroke="#909090"/><text x="1.5" y="11" font-family="Liberation Sans" font-size="9" fill="#000">Σ</text><rect x="0" y="13" width="10" height="1" fill="#606060"/><path d="M8 11v-3.5l2-1.5h4l2 1.5V11z" fill="#E02020" stroke="#202060" stroke-width=".5"/><path d="M11 6l1 2 1-2z" fill="#fff"/><circle cx="12" cy="3.8" r="2.6" fill="#F0B090"/><path d="M9.4 3.4a2.6 2.6 0 0 1 5.2 0" fill="#602010"/><rect x="9" y="10" width="6" height="6" fill="#2040D0"/><path d="M9 10l1-1h6l-1 1zM15 10l1-1v6l-1 1z" fill="#102080"/></svg>
<svg class="a" style="left:830px;top:66px" width="17" height="17" viewBox="0 0 17 17"><path d="M0.5 1.5h8l3.5 3.5V12.5H0.5z" fill="#F8F8F8" stroke="#909090"/><path d="M8.5 1.5v3.5h3.5" fill="none" stroke="#909090"/><text x="1.5" y="11" font-family="Liberation Sans" font-size="9" fill="#000">Σ</text><rect x="0" y="13" width="10" height="1" fill="#606060"/><path d="M10 13v-3.5l2-1.5h4l2 1.5V13z" fill="#3060D0" stroke="#202060" stroke-width=".5"/><path d="M13 8l1 2 1-2z" fill="#fff"/><circle cx="14" cy="5.8" r="2.6" fill="#F0B090"/><path d="M11.4 5.4a2.6 2.6 0 0 1 5.2 0" fill="#602010"/><path d="M5 17v-3.5l2-1.5h4l2 1.5V17z" fill="#E02020" stroke="#202060" stroke-width=".5"/><path d="M8 12l1 2 1-2z" fill="#fff"/><circle cx="9" cy="9.8" r="2.6" fill="#F0B090"/><path d="M6.4 9.4a2.6 2.6 0 0 1 5.2 0" fill="#602010"/></svg>
<svg class="a" style="left:853px;top:66px" width="17" height="17" viewBox="0 0 17 17"><path d="M0.5 1.5h8l3.5 3.5V12.5H0.5z" fill="#F8F8F8" stroke="#909090"/><path d="M8.5 1.5v3.5h3.5" fill="none" stroke="#909090"/><text x="1.5" y="11" font-family="Liberation Sans" font-size="9" fill="#000">Σ</text><rect x="0" y="13" width="10" height="1" fill="#606060"/><rect x="10" y="0" width="6" height="6" fill="#E01010"/><rect x="10" y="0" width="1" height="11" fill="#404040"/><rect x="6" y="12" width="10" height="4" fill="#202080"/><path d="M8 14h6" stroke="#E0E0E0" stroke-dasharray="1 1"/></svg>
<svg class="a" style="left:876px;top:66px" width="17" height="17" viewBox="0 0 17 17"><path d="M0.5 1.5h8l3.5 3.5V12.5H0.5z" fill="#F8F8F8" stroke="#909090"/><path d="M8.5 1.5v3.5h3.5" fill="none" stroke="#909090"/><text x="1.5" y="11" font-family="Liberation Sans" font-size="9" fill="#000">Σ</text><rect x="0" y="13" width="10" height="1" fill="#606060"/><rect x="10" y="0" width="6" height="6" fill="#E01010"/><rect x="10" y="0" width="1" height="11" fill="#404040"/><rect x="8" y="11" width="6" height="5" fill="#D08030"/></svg>
<svg class="a" style="left:899px;top:66px" width="17" height="17" viewBox="0 0 17 17"><path d="M0.5 1.5h8l3.5 3.5V12.5H0.5z" fill="#F8F8F8" stroke="#909090"/><path d="M8.5 1.5v3.5h3.5" fill="none" stroke="#909090"/><text x="1.5" y="11" font-family="Liberation Sans" font-size="9" fill="#000">Σ</text><rect x="0" y="13" width="10" height="1" fill="#606060"/><rect x="10" y="3" width="6" height="6" fill="#E01010"/><path d="M10 3l1-1h6l-1 1zM16 3l1-1v6l-1 1z" fill="#A00000"/><rect x="6" y="11" width="10" height="5" fill="#3070E0"/><path d="M8 13.5h6" stroke="#fff" stroke-dasharray="1 1"/></svg>
<svg class="a" style="left:922px;top:66px" width="17" height="17" viewBox="0 0 17 17"><path d="M0.5 1.5h8l3.5 3.5V12.5H0.5z" fill="#E0E0E0" stroke="#909090"/><path d="M8.5 1.5v3.5h3.5" fill="none" stroke="#909090"/><text x="1.5" y="11" font-family="Liberation Sans" font-size="9" fill="#000">Σ</text><rect x="8" y="4" width="8" height="13" fill="#A0A0A0"/><path d="M9 6h6M9 8h6M9 10h6M9 12h6M9 14h6" stroke="#505050"/></svg>
<svg class="a" style="left:945px;top:66px" width="17" height="17" viewBox="0 0 17 17"><path d="M0.5 1.5h8l3.5 3.5V12.5H0.5z" fill="#F8F8F8" stroke="#909090"/><path d="M8.5 1.5v3.5h3.5" fill="none" stroke="#909090"/><text x="1.5" y="11" font-family="Liberation Sans" font-size="9" fill="#000">Σ</text><rect x="0" y="13" width="10" height="1" fill="#606060"/><path d="M8 11l3 3 5-6" stroke="#20C020" stroke-width="2.4" fill="none"/></svg>
<svg class="a" style="left:967px;top:80px" width="7" height="4" viewBox="0 0 7 4"><path d="M0 0H7L3.5 4Z" fill="#000"/></svg>
<div class="a" style="left:1px;top:88px;width:1362px;height:24px;background:#EEEBE1"></div>
<div class="a" style="left:2px;top:89px;width:232px;height:22px;border:1px solid #8A8674;background:#EFECE3"></div>
<svg class="a" style="left:5px;top:92px" width="16" height="16" viewBox="0 0 16 16"><rect x="1" y="9" width="9" height="6" fill="#40C8E0" stroke="#2060C0"/><path d="M2.5 10.5h6l-3 3z" fill="#0000A0"/><path d="M5.5 4v5M6 3h3" stroke="#000" stroke-dasharray="1 1"/><path d="M11 0l4 4-4 4-4-4z" fill="#F8F890" stroke="#C0B030"/><rect x="10.5" y="3.5" width="1" height="1" fill="#000"/></svg>
<div class="t" style="left:23px;top:94px;">Рабочее место менеджера по продажам</div>
<div class="a" style="left:1px;top:112px;width:1362px;height:606px;background:#424146"></div>
<div class="a" style="left:1px;top:112px;width:1362px;height:1px;background:#5C5B60"></div>
<div class="a" style="left:3px;top:114px;width:1360px;height:18px;background:#7E7D82"></div>
<svg class="a" style="left:4px;top:115px" width="16" height="16" viewBox="0 0 16 16"><path d="M4 1h11v12l-3 3H2V4z" fill="#9C9C5C"/><path d="M4 1h11l-3 3H2z" fill="#C8C890"/><path d="M12 4v12l3-3V1z" fill="#6E6E3C"/><rect x="3" y="5" width="8" height="3" fill="#B4B47C"/><rect x="4" y="6" width="3" height="1" fill="#F8E040"/><path d="M0 10l3-2h9v5H1z" fill="#F0F0E8"/><rect x="5" y="10" width="4" height="1" fill="#40C040"/><rect x="7" y="9" width="3" height="1" fill="#F08030"/></svg>
<div class="t" style="left:24px;top:117px;font-weight:bold;font-size:11.9px;color:#DAD6CE">Серии номенклатуры</div>
<svg class="a" style="left:1305px;top:114px" width="58" height="17" viewBox="0 0 58 17"><rect x="4" y="12" width="8" height="2" fill="#DEDAD2"/><rect x="25.5" y="3.5" width="8" height="8" fill="none" stroke="#DEDAD2"/><rect x="22.5" y="6.5" width="8" height="8" fill="#7E7D82" stroke="#DEDAD2"/><path d="M43 3l9 9M52 3l-9 9" stroke="#DEDAD2" stroke-width="1.8"/></svg>
<div class="a" style="left:3px;top:133px;width:1360px;height:24px;background:#EEE8DF"></div>
<div class="a" style="left:3px;top:133px;width:1360px;height:1px;background:#F6F3EC"></div>
<div class="a" style="left:3px;top:157px;width:1360px;height:1px;background:#8A8674"></div>
<svg class="a" style="left:6px;top:137px" width="17" height="17" viewBox="0 0 17 17"><rect x="4" y="1" width="11" height="3" fill="#A0A8F0"/><rect x="4" y="5" width="11" height="3" fill="#A0A8F0"/><rect x="4" y="9" width="11" height="3" fill="#A0A8F0"/><rect x="4" y="13" width="11" height="3" fill="#A0A8F0"/><path d="M5 2h9M5 6h9M5 10h9M5 14h9" stroke="#E0E4FF" stroke-width="1"/><rect x="0" y="8" width="8" height="1.5" fill="#3050D0"/><path d="M7 5v10l2.5-2.5 2 4 1.5-.8-2-4H14z" fill="#fff" stroke="#404040" stroke-width=".8"/></svg>
<div class="t" style="left:25px;top:139px;">Выбрать</div>
<div class="a" style="left:75px;top:135px;width:1px;height:20px;background:#CDC9BD"></div>
<div class="t" style="left:82px;top:139px;">Действия</div>
<svg class="a" style="left:136px;top:145px" width="5" height="3" viewBox="0 0 5 3"><path d="M0 0H5L2.5 3Z" fill="#000"/></svg>
<div class="a" style="left:147px;top:135px;width:1px;height:20px;background:#CDC9BD"></div>
<svg class="a" style="left:153px;top:137px" width="16" height="16" viewBox="0 0 16 16"><rect x="4" y="1" width="11" height="3" fill="#A0A8F0"/><rect x="4" y="5" width="11" height="3" fill="#A0A8F0"/><rect x="4" y="9" width="11" height="3" fill="#A0A8F0"/><rect x="4" y="13" width="11" height="3" fill="#A0A8F0"/><path d="M5 2h9M5 6h9M5 10h9M5 14h9" stroke="#E0E4FF" stroke-width="1"/><rect x="0" y="9" width="8" height="1.5" fill="#3050D0"/><circle cx="3" cy="3" r="2.5" fill="#FFF060" stroke="#E0C000"/></svg>
<svg class="a" style="left:176px;top:137px" width="16" height="16" viewBox="0 0 16 16"><rect x="4" y="1" width="11" height="3" fill="#A0A8F0"/><rect x="4" y="5" width="11" height="3" fill="#A0A8F0"/><rect x="4" y="9" width="11" height="3" fill="#A0A8F0"/><rect x="4" y="13" width="11" height="3" fill="#A0A8F0"/><path d="M5 2h9M5 6h9M5 10h9M5 14h9" stroke="#E0E4FF" stroke-width="1"/><rect x="0" y="9" width="8" height="1.5" fill="#3050D0"/><path d="M0 4h8M4 0v8" stroke="#20B020" stroke-width="2.2"/></svg>
<svg class="a" style="left:198px;top:137px" width="17" height="17" viewBox="0 0 17 17"><rect x="4" y="1" width="11" height="3" fill="#A0A8F0"/><rect x="4" y="5" width="11" height="3" fill="#A0A8F0"/><rect x="4" y="9" width="11" height="3" fill="#A0A8F0"/><rect x="4" y="13" width="11" height="3" fill="#A0A8F0"/><path d="M5 2h9M5 6h9M5 10h9M5 14h9" stroke="#E0E4FF" stroke-width="1"/><rect x="0" y="8" width="8" height="1.5" fill="#3050D0"/><path d="M8 9l7 6" stroke="#208020" stroke-width="3.2"/><path d="M8 9l7 6" stroke="#60D040" stroke-width="2"/><rect x="14" y="14" width="2" height="2" fill="#F0E040"/></svg>
<svg class="a" style="left:222px;top:137px" width="16" height="17" viewBox="0 0 16 17"><rect x="4" y="1" width="11" height="3" fill="#A0A8F0"/><rect x="4" y="5" width="11" height="3" fill="#A0A8F0"/><rect x="4" y="9" width="11" height="3" fill="#A0A8F0"/><rect x="4" y="13" width="11" height="3" fill="#A0A8F0"/><path d="M5 2h9M5 6h9M5 10h9M5 14h9" stroke="#E0E4FF" stroke-width="1"/><path d="M0 1l6 6M6 1L0 7" stroke="#E02010" stroke-width="2"/><rect x="8" y="9" width="8" height="7" fill="#F8F040" stroke="#808000"/><path d="M10 12l2 2 3-4" stroke="#606000" fill="none"/></svg>
<div class="a" style="left:242px;top:134px;width:22px;height:22px;border:1px solid #8A8674;background:#E4E0D6"></div>
<svg class="a" style="left:245px;top:137px" width="16" height="16" viewBox="0 0 16 16"><rect x="0.5" y="0.5" width="15" height="15" fill="#F0F0F0" stroke="#606060"/><rect x="1" y="1" width="14" height="3" fill="#2040A0"/><rect x="3" y="6" width="5" height="2" fill="#5070C0"/><rect x="9" y="9" width="6" height="6" fill="#A0A0A0"/><path d="M1 15L15 1" stroke="#C02020" stroke-width="1.3"/></svg>
<div class="a" style="left:267px;top:135px;width:1px;height:20px;background:#CDC9BD"></div>
<svg class="a" style="left:273px;top:137px" width="16" height="17" viewBox="0 0 16 17"><path d="M1 9h6M1 11h6M1 13h6M1 15h6" stroke="#B8B8C8"/><path d="M0.5 .5h9l-3.5 4.5v7l-2 1.5V5z" fill="#C8C8C8" stroke="#707070" stroke-width=".8"/><path d="M2 1.5h6" stroke="#fff"/><rect x="4.3" y="5" width="1" height="7" fill="#909090"/><path d="M12 1l2 2M14 1l-2 2M12 4l2 2M14 4l-2 2M12 7l2 2M14 7l-2 2" stroke="#3050C0" stroke-width=".8"/><path d="M13 9v4" stroke="#2040C0" stroke-width="1.4"/><path d="M10 12l3 4 3-4z" fill="#2040C0"/></svg>
<svg class="a" style="left:296px;top:137px" width="16" height="16" viewBox="0 0 16 16"><path d="M0.5 .5h9l-3.5 4.5v7l-2 1.5V5z" fill="#C8C8C8" stroke="#707070" stroke-width=".8"/><path d="M2 1.5h6" stroke="#fff"/><rect x="4.3" y="5" width="1" height="7" fill="#909090"/><rect x="6.5" y="5.5" width="9" height="10" fill="#F4F6FF" stroke="#707080"/><rect x="7" y="6" width="8" height="1.5" fill="#60A0E0"/><rect x="10" y="8.5" width="3" height="2.5" fill="#3050A0"/><rect x="10" y="12" width="3" height="2" fill="#A0A0A0"/></svg>
<svg class="a" style="left:319px;top:137px" width="16" height="17" viewBox="0 0 16 17"><rect x="0" y="2" width="10" height="12" fill="#D0D0D0" stroke="#808080"/><path d="M3.5 4.5h6l3.5 3.5V15.5H3.5z" fill="#F0F8FF" stroke="#2030A0"/><path d="M9.5 4.5v3.5h3.5" fill="none" stroke="#2030A0"/><path d="M6.5 .5h9l-3.5 4.5v7l-2 1.5V5z" fill="#C8C8C8" stroke="#707070" stroke-width=".8"/><path d="M8 1.5h6" stroke="#fff"/><rect x="10.3" y="5" width="1" height="7" fill="#909090"/><path d="M5 12h6" stroke="#20A0A0"/></svg>
<svg class="a" style="left:336px;top:145px" width="6" height="3" viewBox="0 0 6 3"><path d="M0 0H6L3 3Z" fill="#000"/></svg>
<svg class="a" style="left:349px;top:137px" width="15" height="16" viewBox="0 0 15 16"><path d="M0 0h9l-3.5 5v7l-2 1V5z" fill="#C8C8C8"/><path d="M8 9l6 6M14 9l-6 6" stroke="#C0A0A0" stroke-width="1.2"/></svg>
<div class="a" style="left:370px;top:135px;width:1px;height:20px;background:#CDC9BD"></div>
<svg class="a" style="left:378px;top:137px" width="16" height="17" viewBox="0 0 16 17"><path d="M0.5 0.5h9l3.5 3.5V15.5H0.5z" fill="#F8F8FF" stroke="#6080C0"/><path d="M9.5 0.5v3.5h3.5" fill="none" stroke="#6080C0"/><path d="M9 3a5 5 0 0 0-3 9" stroke="#2040E0" stroke-width="1.6" fill="none"/><path d="M7 4a5 5 0 0 1 3 9" stroke="#E02020" stroke-width="1.6" fill="none"/><path d="M1 2v12" stroke="#6080C0" stroke-dasharray="1 1"/></svg>
<div class="a" style="left:399px;top:135px;width:1px;height:20px;background:#CDC9BD"></div>
<svg class="a" style="left:405px;top:137px" width="16" height="16" viewBox="0 0 16 16"><path d="M4 0.5h8l3.5 3.5v8L12 15.5H4L0.5 12V4z" fill="#F8F0B0" stroke="#808070"/><text x="4.5" y="13" font-family="Liberation Sans" font-weight="bold" font-size="12" fill="#1020A0">?</text></svg>
<div class="a" style="left:3px;top:158px;width:1360px;height:559px;background:#FCFAF5"></div>
<div class="a" style="left:11px;top:166px;width:1344px;height:543px;border:1px solid #8C8975;background:#fff"></div>
<div class="a" style="left:12px;top:167px;width:1328px;height:14px;background:#EEE8DF"></div>
<div class="a" style="left:124px;top:167px;width:203px;height:14px;background:#D5D0C7"></div>
<div class="a" style="left:1340px;top:167px;width:1px;height:541px;background:#ECE8DE"></div>
<div class="a" style="left:1341px;top:167px;width:13px;height:541px;background:#FCFAF5"></div>
<div class="a" style="left:11px;top:181px;width:1329px;height:1px;background:#8C8975"></div>
<div class="a" style="left:11px;top:198px;width:1329px;height:1px;background:#8C8975"></div>
<div class="a" style="left:11px;top:215px;width:1329px;height:1px;background:#8C8975"></div>
<div class="a" style="left:11px;top:232px;width:1329px;height:1px;background:#8C8975"></div>
<div class="a" style="left:11px;top:249px;width:1329px;height:1px;background:#8C8975"></div>
<div class="a" style="left:11px;top:266px;width:1329px;height:1px;background:#8C8975"></div>
<div class="a" style="left:11px;top:283px;width:1329px;height:1px;background:#8C8975"></div>
<div class="a" style="left:11px;top:300px;width:1329px;height:1px;background:#8C8975"></div>
<div class="a" style="left:11px;top:317px;width:1329px;height:1px;background:#8C8975"></div>
<div class="a" style="left:11px;top:334px;width:1329px;height:1px;background:#8C8975"></div>
<div class="a" style="left:11px;top:351px;width:1329px;height:1px;background:#8C8975"></div>
<div class="a" style="left:11px;top:368px;width:1329px;height:1px;background:#8C8975"></div>
<div class="a" style="left:11px;top:385px;width:1329px;height:1px;background:#8C8975"></div>
<div class="a" style="left:11px;top:402px;width:1329px;height:1px;background:#8C8975"></div>
<div class="a" style="left:11px;top:419px;width:1329px;height:1px;background:#8C8975"></div>
<div class="a" style="left:11px;top:436px;width:1329px;height:1px;background:#8C8975"></div>
<div class="a" style="left:11px;top:453px;width:1329px;height:1px;background:#8C8975"></div>
<div class="a" style="left:11px;top:470px;width:1329px;height:1px;background:#8C8975"></div>
<div class="a" style="left:11px;top:487px;width:1329px;height:1px;background:#8C8975"></div>
<div class="a" style="left:11px;top:504px;width:1329px;height:1px;background:#8C8975"></div>
<div class="a" style="left:11px;top:521px;width:1329px;height:1px;background:#8C8975"></div>
<div class="a" style="left:11px;top:538px;width:1329px;height:1px;background:#8C8975"></div>
<div class="a" style="left:11px;top:555px;width:1329px;height:1px;background:#8C8975"></div>
<div class="a" style="left:11px;top:572px;width:1329px;height:1px;background:#8C8975"></div>
<div class="a" style="left:11px;top:589px;width:1329px;height:1px;background:#8C8975"></div>
<div class="a" style="left:11px;top:606px;width:1329px;height:1px;background:#8C8975"></div>
<div class="a" style="left:11px;top:623px;width:1329px;height:1px;background:#8C8975"></div>
<div class="a" style="left:11px;top:640px;width:1329px;height:1px;background:#8C8975"></div>
<div class="a" style="left:11px;top:657px;width:1329px;height:1px;background:#8C8975"></div>
<div class="a" style="left:11px;top:674px;width:1329px;height:1px;background:#8C8975"></div>
<div class="a" style="left:11px;top:691px;width:1329px;height:1px;background:#8C8975"></div>
<div class="a" style="left:43px;top:166px;width:1px;height:542px;background:#8C8975"></div>
<div class="a" style="left:123px;top:166px;width:1px;height:542px;background:#8C8975"></div>
<div class="a" style="left:327px;top:166px;width:1px;height:542px;background:#8C8975"></div>
<div class="a" style="left:475px;top:166px;width:1px;height:542px;background:#8C8975"></div>
<div class="a" style="left:623px;top:166px;width:1px;height:542px;background:#8C8975"></div>
<div class="a" style="left:697px;top:166px;width:1px;height:542px;background:#8C8975"></div>
<div class="a" style="left:901px;top:166px;width:1px;height:542px;background:#8C8975"></div>
<div class="a" style="left:1105px;top:166px;width:1px;height:542px;background:#8C8975"></div>
<div class="t" style="left:45px;top:168px;">Код</div>
<div class="t" style="left:125px;top:168px;">Наименование</div>
<div class="t" style="left:329px;top:168px;">Серийный номер</div>
<div class="t" style="left:477px;top:168px;">Номер и дата сертификата</div>
<div class="t" style="left:625px;top:168px;">Срок годнос...</div>
<div class="t" style="left:699px;top:168px;">Номер ГТД</div>
<div class="t" style="left:903px;top:168px;">Страна происхождения</div>
<div class="t" style="left:1107px;top:168px;">Комментарий</div>
<svg class="a" style="left:315px;top:172px" width="5" height="3" viewBox="0 0 5 3"><path d="M0 0H5L2.5 3Z" fill="#000"/></svg>
<svg class="a" style="left:1342px;top:168px" width="11" height="11" viewBox="0 0 11 11"><rect x="0.5" y="0.5" width="10" height="10" fill="#EEE8DF" stroke="#D0CCC0"/><path d="M2 7l3.5-3.5L9 7" stroke="#000" stroke-width="1.3" fill="none"/></svg>
<svg class="a" style="left:1342px;top:696px" width="11" height="11" viewBox="0 0 11 11"><rect x="0.5" y="0.5" width="10" height="10" fill="#EEE8DF" stroke="#D0CCC0"/><path d="M2 4l3.5 3.5L9 4" stroke="#000" stroke-width="1.3" fill="none"/></svg>
<div class="a" style="left:1342px;top:432px;width:11px;height:11px;background:#E9E4DB;border:1px solid #C9C4B8"></div>
<svg class="a" style="left:18px;top:188px" width="9" height="4" viewBox="0 0 9 4"><rect x="1" y="1" width="8" height="3" fill="#9A9A9A"/><rect x="0" y="0" width="8" height="3" rx="1" fill="#3F6FE0"/></svg>
<div class="t" style="left:46px;top:184px;">P01075624</div>
<svg class="a" style="left:18px;top:205px" width="9" height="4" viewBox="0 0 9 4"><rect x="1" y="1" width="8" height="3" fill="#9A9A9A"/><rect x="0" y="0" width="8" height="3" rx="1" fill="#3F6FE0"/></svg>
<div class="t" style="left:46px;top:201px;">P01075625</div>
<svg class="a" style="left:18px;top:222px" width="9" height="4" viewBox="0 0 9 4"><rect x="1" y="1" width="8" height="3" fill="#9A9A9A"/><rect x="0" y="0" width="8" height="3" rx="1" fill="#3F6FE0"/></svg>
<div class="t" style="left:46px;top:218px;">P01075628</div>
<svg class="a" style="left:18px;top:239px" width="9" height="4" viewBox="0 0 9 4"><rect x="1" y="1" width="8" height="3" fill="#9A9A9A"/><rect x="0" y="0" width="8" height="3" rx="1" fill="#3F6FE0"/></svg>
<div class="t" style="left:46px;top:235px;">P01075629</div>
<svg class="a" style="left:18px;top:256px" width="9" height="4" viewBox="0 0 9 4"><rect x="1" y="1" width="8" height="3" fill="#9A9A9A"/><rect x="0" y="0" width="8" height="3" rx="1" fill="#3F6FE0"/></svg>
<div class="t" style="left:46px;top:252px;">P01075631</div>
<svg class="a" style="left:18px;top:273px" width="9" height="4" viewBox="0 0 9 4"><rect x="1" y="1" width="8" height="3" fill="#9A9A9A"/><rect x="0" y="0" width="8" height="3" rx="1" fill="#3F6FE0"/></svg>
<div class="t" style="left:46px;top:269px;">P01075632</div>
<svg class="a" style="left:18px;top:290px" width="9" height="4" viewBox="0 0 9 4"><rect x="1" y="1" width="8" height="3" fill="#9A9A9A"/><rect x="0" y="0" width="8" height="3" rx="1" fill="#3F6FE0"/></svg>
<div class="t" style="left:46px;top:286px;">P01075633</div>
<svg class="a" style="left:18px;top:307px" width="9" height="4" viewBox="0 0 9 4"><rect x="1" y="1" width="8" height="3" fill="#9A9A9A"/><rect x="0" y="0" width="8" height="3" rx="1" fill="#3F6FE0"/></svg>
<div class="t" style="left:46px;top:303px;">P01075634</div>
<svg class="a" style="left:18px;top:324px" width="9" height="4" viewBox="0 0 9 4"><rect x="1" y="1" width="8" height="3" fill="#9A9A9A"/><rect x="0" y="0" width="8" height="3" rx="1" fill="#3F6FE0"/></svg>
<div class="t" style="left:46px;top:320px;">P01075635</div>
<svg class="a" style="left:18px;top:341px" width="9" height="4" viewBox="0 0 9 4"><rect x="1" y="1" width="8" height="3" fill="#9A9A9A"/><rect x="0" y="0" width="8" height="3" rx="1" fill="#3F6FE0"/></svg>
<div class="t" style="left:46px;top:337px;">P01075636</div>
<svg class="a" style="left:18px;top:358px" width="9" height="4" viewBox="0 0 9 4"><rect x="1" y="1" width="8" height="3" fill="#9A9A9A"/><rect x="0" y="0" width="8" height="3" rx="1" fill="#3F6FE0"/></svg>
<div class="t" style="left:46px;top:354px;">P01075637</div>
<svg class="a" style="left:18px;top:375px" width="9" height="4" viewBox="0 0 9 4"><rect x="1" y="1" width="8" height="3" fill="#9A9A9A"/><rect x="0" y="0" width="8" height="3" rx="1" fill="#3F6FE0"/></svg>
<div class="t" style="left:46px;top:371px;">P01075638</div>
<svg class="a" style="left:18px;top:392px" width="9" height="4" viewBox="0 0 9 4"><rect x="1" y="1" width="8" height="3" fill="#9A9A9A"/><rect x="0" y="0" width="8" height="3" rx="1" fill="#3F6FE0"/></svg>
<div class="t" style="left:46px;top:388px;">P01075639</div>
<svg class="a" style="left:18px;top:409px" width="9" height="4" viewBox="0 0 9 4"><rect x="1" y="1" width="8" height="3" fill="#9A9A9A"/><rect x="0" y="0" width="8" height="3" rx="1" fill="#3F6FE0"/></svg>
<div class="t" style="left:46px;top:405px;">P01075640</div>
<svg class="a" style="left:18px;top:426px" width="9" height="4" viewBox="0 0 9 4"><rect x="1" y="1" width="8" height="3" fill="#9A9A9A"/><rect x="0" y="0" width="8" height="3" rx="1" fill="#3F6FE0"/></svg>
<div class="t" style="left:46px;top:422px;">P01075641</div>
<svg class="a" style="left:18px;top:443px" width="9" height="4" viewBox="0 0 9 4"><rect x="1" y="1" width="8" height="3" fill="#9A9A9A"/><rect x="0" y="0" width="8" height="3" rx="1" fill="#3F6FE0"/></svg>
<div class="t" style="left:46px;top:439px;">P01075642</div>
<svg class="a" style="left:18px;top:460px" width="9" height="4" viewBox="0 0 9 4"><rect x="1" y="1" width="8" height="3" fill="#9A9A9A"/><rect x="0" y="0" width="8" height="3" rx="1" fill="#3F6FE0"/></svg>
<div class="t" style="left:46px;top:456px;">P01075643</div>
<svg class="a" style="left:18px;top:477px" width="9" height="4" viewBox="0 0 9 4"><rect x="1" y="1" width="8" height="3" fill="#9A9A9A"/><rect x="0" y="0" width="8" height="3" rx="1" fill="#3F6FE0"/></svg>
<div class="t" style="left:46px;top:473px;">P01075644</div>
<svg class="a" style="left:18px;top:494px" width="9" height="4" viewBox="0 0 9 4"><rect x="1" y="1" width="8" height="3" fill="#9A9A9A"/><rect x="0" y="0" width="8" height="3" rx="1" fill="#3F6FE0"/></svg>
<div class="t" style="left:46px;top:490px;">P01075645</div>
<svg class="a" style="left:18px;top:511px" width="9" height="4" viewBox="0 0 9 4"><rect x="1" y="1" width="8" height="3" fill="#9A9A9A"/><rect x="0" y="0" width="8" height="3" rx="1" fill="#3F6FE0"/></svg>
<div class="t" style="left:46px;top:507px;">P01075646</div>
<svg class="a" style="left:18px;top:528px" width="9" height="4" viewBox="0 0 9 4"><rect x="1" y="1" width="8" height="3" fill="#9A9A9A"/><rect x="0" y="0" width="8" height="3" rx="1" fill="#3F6FE0"/></svg>
<div class="t" style="left:46px;top:524px;">P01075647</div>
<svg class="a" style="left:18px;top:545px" width="9" height="4" viewBox="0 0 9 4"><rect x="1" y="1" width="8" height="3" fill="#9A9A9A"/><rect x="0" y="0" width="8" height="3" rx="1" fill="#3F6FE0"/></svg>
<div class="t" style="left:46px;top:541px;">P01077011</div>
<svg class="a" style="left:18px;top:562px" width="9" height="4" viewBox="0 0 9 4"><rect x="1" y="1" width="8" height="3" fill="#9A9A9A"/><rect x="0" y="0" width="8" height="3" rx="1" fill="#3F6FE0"/></svg>
<div class="t" style="left:46px;top:558px;">P01077012</div>
<svg class="a" style="left:18px;top:579px" width="9" height="4" viewBox="0 0 9 4"><rect x="1" y="1" width="8" height="3" fill="#9A9A9A"/><rect x="0" y="0" width="8" height="3" rx="1" fill="#3F6FE0"/></svg>
<div class="t" style="left:46px;top:575px;">P01077013</div>
<svg class="a" style="left:18px;top:596px" width="9" height="4" viewBox="0 0 9 4"><rect x="1" y="1" width="8" height="3" fill="#9A9A9A"/><rect x="0" y="0" width="8" height="3" rx="1" fill="#3F6FE0"/></svg>
<div class="t" style="left:46px;top:592px;">P01077014</div>
<svg class="a" style="left:18px;top:613px" width="9" height="4" viewBox="0 0 9 4"><rect x="1" y="1" width="8" height="3" fill="#9A9A9A"/><rect x="0" y="0" width="8" height="3" rx="1" fill="#3F6FE0"/></svg>
<div class="t" style="left:46px;top:609px;">P01077015</div>
<svg class="a" style="left:18px;top:630px" width="9" height="4" viewBox="0 0 9 4"><rect x="1" y="1" width="8" height="3" fill="#9A9A9A"/><rect x="0" y="0" width="8" height="3" rx="1" fill="#3F6FE0"/></svg>
<div class="t" style="left:46px;top:626px;">P01077016</div>
<svg class="a" style="left:18px;top:647px" width="9" height="4" viewBox="0 0 9 4"><rect x="1" y="1" width="8" height="3" fill="#9A9A9A"/><rect x="0" y="0" width="8" height="3" rx="1" fill="#3F6FE0"/></svg>
<div class="t" style="left:46px;top:643px;">P01077020</div>
<svg class="a" style="left:18px;top:664px" width="9" height="4" viewBox="0 0 9 4"><rect x="1" y="1" width="8" height="3" fill="#9A9A9A"/><rect x="0" y="0" width="8" height="3" rx="1" fill="#3F6FE0"/></svg>
<div class="t" style="left:46px;top:660px;">P01079644</div>
<svg class="a" style="left:18px;top:681px" width="9" height="4" viewBox="0 0 9 4"><rect x="1" y="1" width="8" height="3" fill="#9A9A9A"/><rect x="0" y="0" width="8" height="3" rx="1" fill="#3F6FE0"/></svg>
<div class="t" style="left:46px;top:677px;">P01079645</div>
<svg class="a" style="left:18px;top:698px" width="9" height="4" viewBox="0 0 9 4"><rect x="1" y="1" width="8" height="3" fill="#9A9A9A"/><rect x="0" y="0" width="8" height="3" rx="1" fill="#3F6FE0"/></svg>
<div class="t" style="left:46px;top:694px;">P01079646</div>
<div class="a" style="left:124px;top:182px;width:203px;height:16px;background:#000080;border:1px dotted #F4E870"></div>
<div class="a" style="left:1px;top:717px;width:1362px;height:24px;background:#EEE8DF"></div>
<div class="a" style="left:1px;top:717px;width:1362px;height:1px;background:#D2CEC6"></div>
<div class="a" style="left:2px;top:720px;width:172px;height:20px;background:#808080"></div>
<div class="a" style="left:174px;top:719px;width:174px;height:22px;background:#F6F2EA"></div>
<svg class="a" style="left:4px;top:721px" width="16" height="16" viewBox="0 0 16 16"><rect x="1" y="9" width="9" height="6" fill="#40C8E0" stroke="#2060C0"/><path d="M2.5 10.5h6l-3 3z" fill="#0000A0"/><path d="M5.5 4v5M6 3h3" stroke="#000" stroke-dasharray="1 1"/><path d="M11 0l4 4-4 4-4-4z" fill="#F8F890" stroke="#C0B030"/><rect x="10.5" y="3.5" width="1" height="1" fill="#000"/></svg>
<div class="t" style="left:21px;top:724px;color:#D8D4CC">Рабочий стол</div>
<div class="a" style="left:175px;top:720px;width:172px;height:20px;background:#0A246A"></div>
<svg class="a" style="left:177px;top:721px" width="16" height="16" viewBox="0 0 16 16"><path d="M4 1h11v12l-3 3H2V4z" fill="#9C9C5C"/><path d="M4 1h11l-3 3H2z" fill="#C8C890"/><path d="M12 4v12l3-3V1z" fill="#6E6E3C"/><rect x="3" y="5" width="8" height="3" fill="#B4B47C"/><rect x="4" y="6" width="3" height="1" fill="#F8E040"/><path d="M0 10l3-2h9v5H1z" fill="#F0F0E8"/><rect x="5" y="10" width="4" height="1" fill="#40C040"/><rect x="7" y="9" width="3" height="1" fill="#F08030"/></svg>
<div class="t" style="left:194px;top:724px;color:#fff">Серии номенклатуры</div>
<div class="a" style="left:1px;top:740px;width:1362px;height:22px;background:#EEE8DF"></div>
<div class="a" style="left:1px;top:742px;width:1362px;height:1px;background:#DCD6CA"></div>
<div class="t" style="left:5px;top:746px;">Добавить новый элемент</div>
<div class="a" style="left:1076px;top:736px;width:25px;height:21px;background:#D6D3CE"></div>
<div class="a" style="left:1100px;top:736px;width:1px;height:21px;background:#404040"></div>
<div class="t" style="left:1079px;top:741px;font-size:11.6px">RU</div>
<div class="a" style="left:1101px;top:742px;width:190px;height:19px;border:1px solid #D8D2C6"></div>
<div class="a" style="left:1297px;top:742px;width:29px;height:19px;border:1px solid #D8D2C6"></div>
<div class="t" style="left:1299px;top:746px;color:#808080;font-size:11.4px">CAP</div>
<div class="a" style="left:1331px;top:742px;width:32px;height:19px;border:1px solid #D8D2C6"></div>
<div class="t" style="left:1334px;top:746px;color:#000020;font-size:11.4px">NUM</div>
<div class="a" style="left:412px;top:248px;width:543px;height:261px;background:#0A246A"></div>
<div class="a" style="left:416px;top:270px;width:535px;height:235px;background:#EEE8DF"></div>
<div class="t" style="left:421px;top:255px;font-weight:bold;font-size:11.5px;color:#fff">1С:Предприятие</div>
<svg class="a" style="left:915px;top:255px" width="12" height="12" viewBox="0 0 12 12"><rect x="0.5" y="0.5" width="10" height="10" fill="none" stroke="#fff" stroke-width="1.3"/><rect x="0" y="0" width="11" height="2.2" fill="#fff"/></svg>
<svg class="a" style="left:935px;top:255px" width="12" height="12" viewBox="0 0 12 12"><path d="M1.5 1.5l8.5 8.5M10 1.5l-8.5 8.5" stroke="#fff" stroke-width="1.8"/></svg>
<svg class="a" style="left:422px;top:276px" width="34" height="34" viewBox="0 0 34 34"><circle cx="17" cy="17" r="14.5" fill="#808080" opacity=".6"/><circle cx="15" cy="15" r="14.5" fill="#FF0000" stroke="#A00000" stroke-width="1"/><path d="M9 9l12 12M21 9L9 21" stroke="#fff" stroke-width="3.6"/></svg>
<div class="t" style="left:471px;top:285px;">Обнаружены ошибки:</div>
<div class="a" style="left:836px;top:276px;width:109px;height:20px;border:2px solid #8A8672;background:#E2DED5"></div>
<div class="a" style="left:839px;top:279px;width:103px;height:14px;border:1px dotted #000"></div>
<div class="t" style="left:868px;top:280px;">Закрыть</div>
<div class="a" style="left:836px;top:305px;width:109px;height:20px;border:1px solid #A8A490;background:#E2DED5"></div>
<div class="t" style="left:850px;top:309px;">Конфигуратор...</div>
<div class="a" style="left:836px;top:334px;width:109px;height:20px;border:1px solid #A8A490;background:#E2DED5"></div>
<div class="t" style="left:845px;top:338px;">Завершить работу</div>
<div class="a" style="left:422px;top:316px;width:404px;height:183px;border:1px solid #8C8876;background:#fff"></div>
<div class="a" style="left:423px;top:317px;width:18px;height:167px;background:repeating-conic-gradient(#DEDAD2 0 25%,#F6F4F0 0 50%) 0 0/2px 2px"></div>
<svg class="a" style="left:424px;top:319px" width="17" height="5" viewBox="0 0 17 5"><rect x="1" y="0" width="3" height="1" fill="#B00010"/><rect x="0" y="1" width="1.4" height="3" fill="#B00010"/><rect x="4" y="1" width="1" height="1" fill="#B00010"/><rect x="0" y="2" width="5" height="1" fill="#B00010"/><rect x="1" y="4" width="4" height="1" fill="#B00010"/><rect x="5.5" y="0" width="2" height="1" fill="#B00010"/><rect x="6.5" y="0" width="1.6" height="5" fill="#B00010"/><rect x="8.0" y="1" width="1" height="1" fill="#B00010"/><rect x="9.0" y="0" width="1.5" height="1" fill="#B00010"/><rect x="9.5" y="1" width="1" height="1" fill="#B00010"/><rect x="5.5" y="4" width="4.5" height="1" fill="#B00010"/><rect x="11" y="0" width="2" height="1" fill="#B00010"/><rect x="12" y="0" width="1.6" height="5" fill="#B00010"/><rect x="13.5" y="1" width="1" height="1" fill="#B00010"/><rect x="14.5" y="0" width="1.5" height="1" fill="#B00010"/><rect x="15" y="1" width="1" height="1" fill="#B00010"/><rect x="11" y="4" width="4.5" height="1" fill="#B00010"/></svg>
<div class="t" style="left:443px;top:318px;font-family:'Liberation Mono';font-size:13.33px;line-height:16px;transform:none">{Справочник.СерииНоменклатуры.Форма.ФормаЭлемент</div>
<div class="t" style="left:443px;top:334px;font-family:'Liberation Mono';font-size:13.33px;line-height:16px;white-space:pre;transform:none">    &lt;&lt;?&gt;&gt;Исключение</div>
<div class="a" style="left:423px;top:484px;width:402px;height:14px;background:#FCFAF5"></div>
<div class="a" style="left:424px;top:486px;width:11px;height:11px;background:#EEE8DF;border:1px solid #D0CCC0"></div>
<svg class="a" style="left:426px;top:487px" width="8" height="9" viewBox="0 0 8 9"><path d="M6 1L2 4.5 6 8" stroke="#000" stroke-width="1.3" fill="none"/></svg>
<div class="a" style="left:436px;top:486px;width:43px;height:11px;background:#EEE8DF;border:1px solid #D0CCC0"></div>
<div class="a" style="left:813px;top:486px;width:11px;height:11px;background:#EEE8DF;border:1px solid #D0CCC0"></div>
<svg class="a" style="left:815px;top:487px" width="8" height="9" viewBox="0 0 8 9"><path d="M2 1l4 3.5L2 8" stroke="#000" stroke-width="1.3" fill="none"/></svg>
<div class="a" style="left:0px;top:0px;width:1px;height:763px;background:#000"></div>
<div class="a" style="left:0px;top:762px;width:1363px;height:1px;background:#000"></div>
</body></html>
